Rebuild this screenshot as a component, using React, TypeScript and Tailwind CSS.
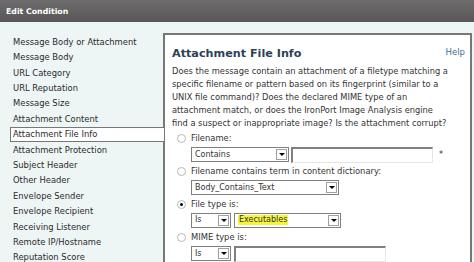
import React from 'react';

const items = [
  'Message Body or Attachment',
  'Message Body',
  'URL Category',
  'URL Reputation',
  'Message Size',
  'Attachment Content',
  'Attachment File Info',
  'Attachment Protection',
  'Subject Header',
  'Other Header',
  'Envelope Sender',
  'Envelope Recipient',
  'Receiving Listener',
  'Remote IP/Hostname',
  'Reputation Score',
];

const lines = [
  'Does the message contain an attachment of a filetype matching a',
  'specific filename or pattern based on its fingerprint (similar to a',
  'UNIX file command)? Does the declared MIME type of an',
  'attachment match, or does the IronPort Image Analysis engine',
  'find a suspect or inappropriate image? Is the attachment corrupt?',
];

function Radio({ checked }: { checked?: boolean }) {
  return (
    <span className="w-[9px] h-[9px] rounded-full border border-[#b8b8b8] bg-white flex items-center justify-center shrink-0">
      {checked && <span className="w-[3px] h-[3px] rounded-full bg-black" />}
    </span>
  );
}

function Select({ w, text, highlight }: { w: string; text: string; highlight?: boolean }) {
  return (
    <div className={`${w} h-[15px] border border-[#7f7f7f] bg-white flex items-center justify-between pl-[3px] pr-[1px]`}>
      <span className={`text-[8px] leading-[10px] ${highlight ? 'bg-[#f5f53a] px-[1px]' : ''}`}>{text}</span>
      <span className="w-[11px] h-[11px] border border-[#a0a0a0] flex items-center justify-center">
        <span className="w-0 h-0 border-l-[3px] border-r-[3px] border-t-[3px] border-l-transparent border-r-transparent border-t-black" />
      </span>
    </div>
  );
}

function Input({ w }: { w: string }) {
  return <div className={`${w} h-[16px] bg-white border-t-2 border-l-2 border-[#808080] border-r border-b border-r-[#e6e6e6] border-b-[#e6e6e6]`} />;
}

export default function App() {
  return (
    <div className="w-[474px] h-[262px] overflow-hidden bg-[#eef5f5] text-[#2a2a2a]" style={{ fontFamily: '"DejaVu Sans", Verdana, sans-serif' }}>
      <div className="h-[22px] bg-gradient-to-b from-[#6e6c6c] to-[#585656] flex items-center pl-[6px] pt-[1px]">
        <span className="text-white font-bold text-[7.8px]">Edit Condition</span>
      </div>
      <div className="flex pt-[11px]">
        <div className="w-[163px] shrink-0 pt-[1.5px]">
          {items.map((it, i) =>
            i === 6 ? (
              <div key={it} className="relative z-10 -mr-px ml-[10px] h-[15.4px] bg-white border border-r-0 border-[#777] pl-[2px] flex items-center text-[8.4px]">
                {it}
              </div>
            ) : (
              <div key={it} className="ml-[10px] h-[15.4px] pl-[3px] flex items-center text-[8.4px]">
                {it}
              </div>
            )
          )}
        </div>
        <div className="flex-1 mr-[2px] h-[240px] bg-white border-t-2 border-l-2 border-r-2 border-[#777] pl-[7px] pr-[5px]">
          <div className="flex items-end justify-between pt-[11px]">
            <h1 className="font-bold text-[11.2px] leading-[14px] text-[#2e3f58]">Attachment File Info</h1>
            <span className="text-[8.5px] text-[#3d7093] mb-[2px]">Help</span>
          </div>
          <p className="text-[8.3px] leading-[13px] mt-[4px] text-[#333] whitespace-nowrap">
            {lines.map((l) => (
              <span key={l} className="block">{l}</span>
            ))}
          </p>
          <div className="pl-[5px] mt-[2px] text-[8.4px] text-[#333]">
            <div className="flex items-center gap-[5px] h-[14px]">
              <Radio />
              <span>Filename:</span>
            </div>
            <div className="flex items-center gap-[2px] pl-[14px] mt-[1px]">
              <Select w="w-[98px]" text="Contains" />
              <Input w="w-[142px]" />
              <span className="ml-[4px] text-[8px]">*</span>
            </div>
            <div className="flex items-center gap-[5px] h-[14px] mt-[2px]">
              <Radio />
              <span>Filename contains term in content dictionary:</span>
            </div>
            <div className="flex pl-[14px] mt-[1.5px]">
              <Select w="w-[148px]" text="Body_Contains_Text" />
            </div>
            <div className="flex items-center gap-[5px] h-[14px] mt-[2.5px]">
              <Radio checked />
              <span>File type is:</span>
            </div>
            <div className="flex items-center gap-[3px] pl-[14px] mt-[1px]">
              <Select w="w-[40px]" text="Is" />
              <Select w="w-[107px]" text="Executables" highlight />
            </div>
            <div className="flex items-center gap-[5px] h-[14px] mt-[3px]">
              <Radio />
              <span>MIME type is:</span>
            </div>
            <div className="flex items-center gap-[3px] pl-[14px] mt-[1px]">
              <Select w="w-[40px]" text="Is" />
              <Input w="w-[152px]" />
            </div>
          </div>
        </div>
      </div>
    </div>
  );
}
